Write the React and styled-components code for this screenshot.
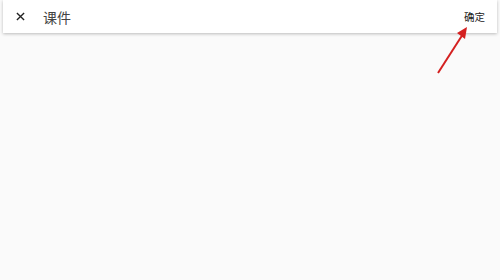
import styled, { createGlobalStyle } from "styled-components";

const GlobalStyle = createGlobalStyle`
    html, body {
        margin: 0;
        padding: 0;
        background: #fafafa;
        font-family: "Noto Sans CJK SC", "Noto Sans", sans-serif;
    }
`;

const Page = styled.div`
    width: 500px;
    height: 280px;
    background: #fafafa;
    padding: 0 3px;
    box-sizing: border-box;
    position: relative;
`;

const TopBar = styled.div`
    height: 33px;
    background: #ffffff;
    box-shadow: 0 1px 3px rgba(0, 0, 0, 0.25);
    display: flex;
    align-items: center;
    padding: 0 12px 0 8px;
`;

const CloseButton = styled.button`
    border: none;
    background: transparent;
    padding: 0;
    width: 14px;
    height: 14px;
    display: flex;
    align-items: center;
    justify-content: center;
    margin-left: 2px;
    svg {
        width: 9px;
        height: 9px;
        stroke: #222;
        stroke-width: 1.5;
    }
`;

const Title = styled.div`
    margin-left: 16px;
    font-size: 14px;
    color: #444;
    flex-grow: 1;
`;

const ConfirmButton = styled.button`
    border: none;
    background: transparent;
    padding: 0;
    font-family: inherit;
    font-size: 10.5px;
    color: #222;
`;

const Arrow = styled.svg`
    position: absolute;
    left: 430px;
    top: 20px;
    width: 45px;
    height: 60px;
`;

function App() {
    return (
        <Page>
            <GlobalStyle />
            <TopBar>
                <CloseButton>
                    <svg viewBox="0 0 10 10">
                        <path d="M1 1L9 9M9 1L1 9" />
                    </svg>
                </CloseButton>
                <Title>课件</Title>
                <ConfirmButton>确定</ConfirmButton>
            </TopBar>
            <Arrow viewBox="0 0 45 60">
                <path d="M8 53L33 14" stroke="#d42020" strokeWidth="2" fill="none" />
                <path d="M37 7L27 13L35 19Z" fill="#d42020" />
            </Arrow>
        </Page>
    );
}

export default App;
